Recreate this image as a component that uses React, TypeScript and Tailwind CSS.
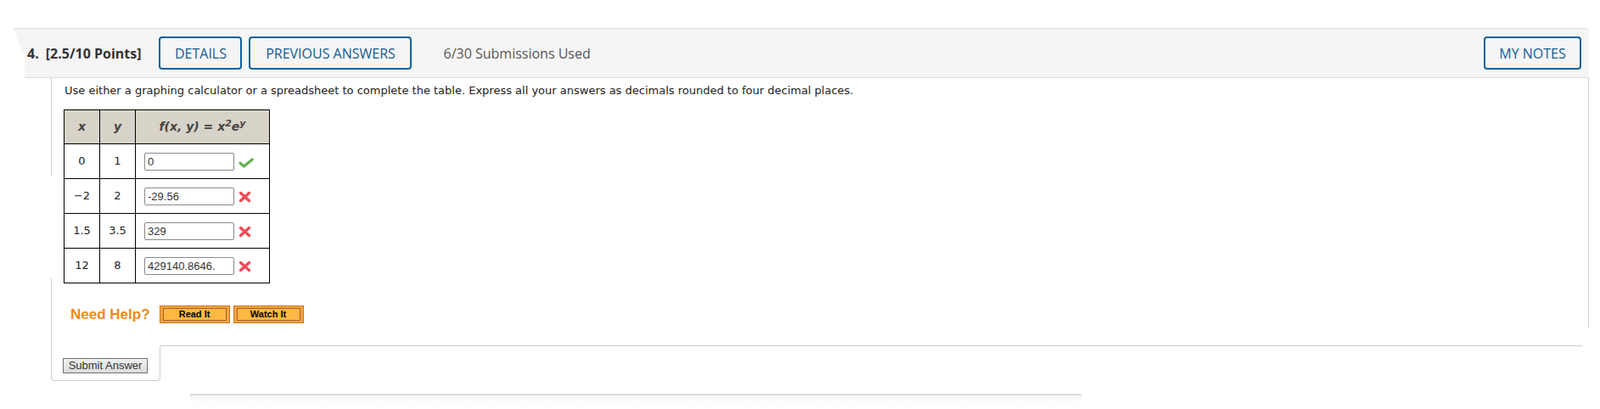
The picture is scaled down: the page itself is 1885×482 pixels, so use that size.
import React from "react";

const rows = [
  { x: "0", y: "1", value: "0", ok: true },
  { x: "\u22122", y: "2", value: "-29.56", ok: false },
  { x: "1.5", y: "3.5", value: "329", ok: false },
  { x: "12", y: "8", value: "429140.8646.", ok: false },
];

function CheckMark() {
  return (
    <svg width="18" height="12" viewBox="0 0 18 12" className="mt-[3px]">
      <path
        d="M2 6.2 L6.4 10 L16.2 2"
        fill="none"
        stroke="#66b04f"
        strokeWidth="3.2"
        strokeLinecap="round"
        strokeLinejoin="round"
      />
    </svg>
  );
}

function CrossMark() {
  return (
    <svg width="15" height="14" viewBox="0 0 15 14" className="mt-[2px]">
      <path
        d="M2.5 2.5 L12.5 11.5 M12.5 2.5 L2.5 11.5"
        fill="none"
        stroke="#ee4c57"
        strokeWidth="3.4"
        strokeLinecap="round"
      />
    </svg>
  );
}

function HelpButton({ label }: { label: string }) {
  return (
    <button className="h-[21px] w-[83px] border border-[#c4782c] bg-[#f7a23a] px-[3px] py-[2px]">
      <span className="flex h-full w-full items-center justify-center border border-[#a0632a] bg-[#ffb845] font-['Liberation_Sans',Arial,sans-serif] text-[11px] font-bold leading-none text-black">
        {label}
      </span>
    </button>
  );
}

export default function App() {
  return (
    <div className="min-h-[482px] w-[1885px] bg-white">
      {/* question header */}
      <div className="pl-[16px] pt-[33px]">
        <div className="flex h-[59px] w-[1856px] items-center rounded-tr-[4px] border-y border-[#dddddd] bg-[#f5f5f5] pl-[16px] pr-[9px] font-['Open_Sans',sans-serif] [clip-path:polygon(0_0,100%_0,100%_100%,13px_100%,13px_62%)]">
          <span className="text-[16px] font-bold text-[#333333]">4.</span>
          <span className="ml-[8px] text-[16px] font-bold text-[#333333]">[2.5/10 Points]</span>
          <button className="ml-[21px] h-[39px] w-[98px] rounded-[4px] border-2 border-[#10629b] text-[16px] text-[#135b92]">
            DETAILS
          </button>
          <button className="ml-[8px] h-[39px] w-[192px] rounded-[4px] border-2 border-[#10629b] text-[16px] text-[#135b92]">
            PREVIOUS ANSWERS
          </button>
          <span className="ml-[37px] text-[16px] text-[#555555]">6/30 Submissions Used</span>
          <button className="ml-auto h-[39px] w-[115px] rounded-[4px] border-2 border-[#10629b] text-[16px] text-[#135b92]">
            MY NOTES
          </button>
        </div>
      </div>

      {/* question body */}
      <div className="ml-[60px] flex h-[295px] w-[1812px] border-r border-[#cccccc]">
        <div className="flex w-[1px] flex-col">
          <div className="h-[115px] bg-[#cccccc]" />
          <div className="h-[121px]" />
          <div className="flex-1 bg-[#cccccc]" />
        </div>
        <div className="flex-1 pl-[14px] pt-[7px] font-['DejaVu_Sans',Verdana,sans-serif]">
          <p className="pl-[1px] text-[13px] leading-[16px] text-[#222222]">
            Use either a graphing calculator or a spreadsheet to complete the table. Express all your answers as decimals rounded to four decimal places.
          </p>

          <table className="mt-[14px] w-[242px] table-fixed border-collapse text-[13px]">
            <colgroup>
              <col className="w-[42px]" />
              <col className="w-[42px]" />
              <col className="w-[158px]" />
            </colgroup>
            <thead>
              <tr className="h-[40px] bg-[#d7d3c8]">
                <th className="border border-black text-[14px] font-bold italic text-[#444444]">x</th>
                <th className="border border-black text-[14px] font-bold italic text-[#444444]">y</th>
                <th className="border border-black text-[14px] font-bold italic text-[#444444]">
                  f(x, y) = x<sup className="text-[11px]">2</sup>e<sup className="text-[11px]">y</sup>
                </th>
              </tr>
            </thead>
            <tbody>
              {rows.map((r) => (
                <tr key={r.x} className="h-[41px]">
                  <td className="border border-black text-center text-[#222222]">{r.x}</td>
                  <td className="border border-black text-center text-[#222222]">{r.y}</td>
                  <td className="border border-black pl-[10px]">
                    <div className="flex items-center gap-[5px]">
                      <input
                        readOnly
                        value={r.value}
                        className="h-[21px] w-[106px] rounded-[2px] border border-[#8a8a8a] bg-white px-[3px] font-['Liberation_Sans',Arial,sans-serif] text-[13px] text-[#333333] outline-none"
                      />
                      {r.ok ? <CheckMark /> : <CrossMark />}
                    </div>
                  </td>
                </tr>
              ))}
            </tbody>
          </table>

          <div className="ml-[8px] mt-[24px] flex items-center">
            <span className="font-['Liberation_Sans',Arial,sans-serif] text-[17px] font-bold text-[#ef8a14]">Need Help?</span>
            <div className="ml-[11px] flex gap-[4px]">
              <HelpButton label="Read It" />
              <HelpButton label="Watch It" />
            </div>
          </div>
        </div>
      </div>

      {/* submit tab */}
      <div className="flex">
        <div className="ml-[60px] flex w-[129px] flex-col">
          <div className="h-[21px] border-l border-[#cccccc]" />
          <div className="h-[41px] rounded-b-[4px] border-x border-b border-[#cccccc] pl-[13px] pt-[9px]">
            <button className="h-[18px] w-[100px] border border-[#707070] bg-gradient-to-b from-[#f0f0f0] to-[#dcdcdc] font-['Liberation_Sans',Arial,sans-serif] text-[13px] leading-none text-[#333333]">
              Submit Answer
            </button>
          </div>
        </div>
        <div className="mt-[20px] h-0 w-[1675px] border-t border-[#cccccc]" />
      </div>

      {/* page divider */}
      <div className="ml-[224px] mt-[15px] w-[1050px]">
        <div className="h-[2px] bg-[#dddddd]" />
        <div className="h-[8px] bg-gradient-to-b from-[#f3f3f3] to-white" />
      </div>
    </div>
  );
}
